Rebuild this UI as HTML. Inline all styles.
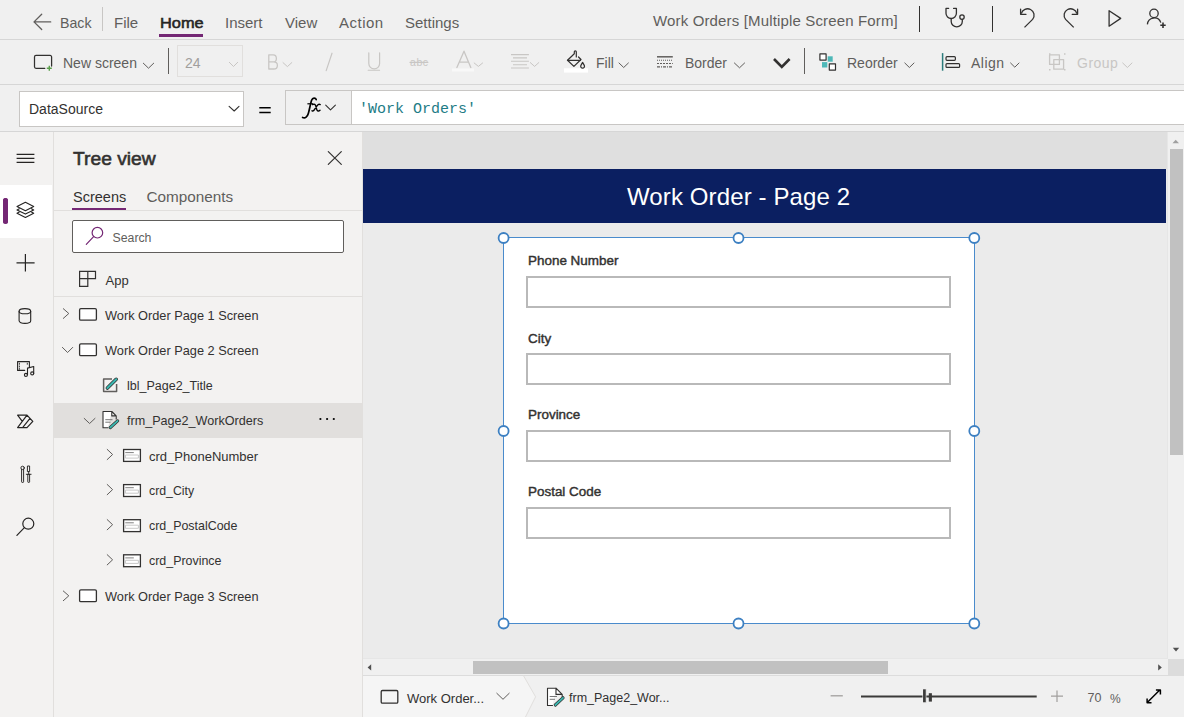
<!DOCTYPE html>
<html><head><meta charset="utf-8">
<style>
*{margin:0;padding:0;box-sizing:border-box}
html,body{width:1184px;height:717px;overflow:hidden;background:#f0f0f0;font-family:"Liberation Sans",sans-serif;color:#605e5c}
.a{position:absolute}
.t{position:absolute;white-space:nowrap;line-height:1}
svg{position:absolute;overflow:visible}
</style></head><body>

<!-- ===== HEADER ===== -->
<div class="a" style="left:0;top:0;width:1184px;height:39px;background:#f0f0f0"></div>
<div class="a" style="left:0;top:39px;width:1184px;height:1px;background:#d6d6d6"></div>
<div class="t" style="left:60px;top:16px;font-size:14.2px">Back</div>
<div class="a" style="left:102px;top:7px;width:1px;height:24px;background:#c8c6c4"></div>
<div class="t" style="left:114px;top:15px;font-size:15px">File</div>
<div class="t" style="left:159.5px;top:15px;font-size:15px;-webkit-text-stroke:0.55px #252423;color:#252423;transform:scaleX(1.09);transform-origin:0 0">Home</div>
<div class="a" style="left:159px;top:34px;width:44px;height:3px;background:#742774"></div>
<div class="t" style="left:225px;top:15px;font-size:15px">Insert</div>
<div class="t" style="left:285px;top:15px;font-size:15px">View</div>
<div class="t" style="left:339px;top:15px;font-size:15px;letter-spacing:0.5px">Action</div>
<div class="t" style="left:405px;top:15px;font-size:15px">Settings</div>
<div class="t" style="left:653px;top:12.6px;font-size:15px;letter-spacing:0.15px">Work Orders [Multiple Screen Form]</div>
<div class="a" style="left:919px;top:6px;width:1px;height:26px;background:#323130"></div>
<div class="a" style="left:992px;top:6px;width:1px;height:26px;background:#323130"></div>

<!-- ===== TOOLBAR ===== -->
<div class="a" style="left:0;top:84px;width:1184px;height:1px;background:#d6d6d6"></div>
<div class="t" style="left:63px;top:56px;font-size:14px">New screen</div>
<div class="a" style="left:168px;top:48px;width:1px;height:26px;background:#605e5c"></div>
<div class="a" style="left:177px;top:45px;width:66px;height:32px;border:1px solid #e1dfdd;background:#f0f0f0"></div>
<div class="t" style="left:185px;top:56px;font-size:14px;color:#a19f9d">24</div>
<div class="t" style="left:596px;top:56px;font-size:14px">Fill</div>
<div class="t" style="left:685px;top:56px;font-size:14px">Border</div>
<div class="a" style="left:804px;top:48px;width:1px;height:26px;background:#605e5c"></div>
<div class="t" style="left:847px;top:56px;font-size:14px">Reorder</div>
<div class="t" style="left:971px;top:56px;font-size:14px;letter-spacing:0.5px">Align</div>
<div class="t" style="left:1077px;top:56px;font-size:14px;color:#c8c6c4;letter-spacing:0.5px">Group</div>

<!-- ===== FORMULA BAR ===== -->
<div class="a" style="left:0;top:131px;width:1184px;height:1px;background:#d6d6d6"></div>
<div class="a" style="left:19px;top:91px;width:225px;height:36px;background:#fff;border:1px solid #c8c6c4"></div>
<div class="t" style="left:29px;top:102px;font-size:14px;color:#323130">DataSource</div>
<div class="a" style="left:285px;top:90px;width:67px;height:35px;border:1px solid #c8c6c4;background:#f0f0f0"></div>
<div class="a" style="left:351px;top:90px;width:833px;height:35px;border:1px solid #c8c6c4;border-right:none;background:#fff"></div>
<div class="t" style="left:359px;top:102px;font-size:15px;font-family:'Liberation Mono',monospace;color:#1e7c86">'Work Orders'</div>

<!-- ===== LEFT RAIL ===== -->
<div class="a" style="left:0;top:132px;width:53px;height:585px;background:#f3f2f1"></div>
<div class="a" style="left:53px;top:132px;width:1px;height:585px;background:#e1dfdd"></div>
<div class="a" style="left:0;top:185px;width:52px;height:53px;background:#fff"></div>
<div class="a" style="left:3px;top:198px;width:5px;height:26px;background:#742774;border-radius:3px"></div>

<!-- ===== TREE PANEL ===== -->
<div class="a" style="left:54px;top:132px;width:308px;height:585px;background:#f3f2f1"></div>
<div class="a" style="left:362px;top:132px;width:1px;height:585px;background:#e1dfdd"></div>
<div class="t" style="left:72.5px;top:150px;font-size:18.7px;-webkit-text-stroke:0.6px #323130;color:#323130;transform:scaleX(1.03);transform-origin:0 0">Tree view</div>
<div class="t" style="left:72.5px;top:188.9px;font-size:15.3px;color:#323130;transform:scaleX(0.948);transform-origin:0 0">Screens</div>
<div class="t" style="left:146.5px;top:188.9px;font-size:15.3px;color:#605e5c;transform:scaleX(1.0);transform-origin:0 0">Components</div>
<div class="a" style="left:72px;top:208px;width:54px;height:2px;background:#742774"></div>
<div class="a" style="left:54px;top:210px;width:308px;height:1px;background:#e1dfdd"></div>
<div class="a" style="left:72px;top:220px;width:272px;height:33px;background:#fff;border:1px solid #605e5c;border-radius:2px"></div>
<div class="t" style="left:112.5px;top:232.3px;font-size:12.3px;color:#605e5c">Search</div>
<div class="t" style="left:105.5px;top:274px;font-size:13px;color:#323130">App</div>
<div class="a" style="left:54px;top:296px;width:308px;height:1px;background:#e1dfdd"></div>

<div class="a" style="left:54px;top:403px;width:308px;height:35px;background:#e1dfdd"></div>

<div class="t" style="left:105px;top:309.5px;font-size:12.75px;color:#323130">Work Order Page 1 Screen</div>
<div class="t" style="left:105px;top:344.5px;font-size:12.75px;color:#323130">Work Order Page 2 Screen</div>
<div class="t" style="left:127px;top:379.5px;font-size:12.5px;color:#323130">lbl_Page2_Title</div>
<div class="t" style="left:127px;top:414.5px;font-size:12.6px;color:#323130">frm_Page2_WorkOrders</div>
<div class="t" style="left:149px;top:450px;font-size:13px;color:#323130">crd_PhoneNumber</div>
<div class="t" style="left:149px;top:485px;font-size:12.3px;color:#323130">crd_City</div>
<div class="t" style="left:149px;top:520px;font-size:12.43px;color:#323130">crd_PostalCode</div>
<div class="t" style="left:149px;top:555px;font-size:12.43px;color:#323130">crd_Province</div>
<div class="t" style="left:105px;top:590.5px;font-size:12.75px;color:#323130">Work Order Page 3 Screen</div>

<!-- ===== CANVAS ===== -->
<div class="a" style="left:363px;top:132px;width:805px;height:526px;background:#ebebeb"></div>
<div class="a" style="left:363px;top:132px;width:805px;height:37px;background:#dfdfdf"></div>
<div class="a" style="left:363px;top:169px;width:803px;height:54px;background:#0b1f61"></div>
<div class="t" style="left:627px;top:185px;font-size:24px;color:#fff;letter-spacing:0.12px">Work Order - Page 2</div>

<div class="a" style="left:503px;top:237px;width:472px;height:387px;background:#fff;border:1px solid #4a8bcc"></div>

<div class="t" style="left:527.5px;top:255.1px;font-size:12.5px;-webkit-text-stroke:0.4px #323130;color:#323130;transform:scaleX(1.075);transform-origin:0 0">Phone Number</div>
<div class="a" style="left:526px;top:276px;width:425px;height:32px;border:2px solid #b9b9b9"></div>
<div class="t" style="left:527.5px;top:333.1px;font-size:12.5px;-webkit-text-stroke:0.4px #323130;color:#323130;transform:scaleX(1.075);transform-origin:0 0">City</div>
<div class="a" style="left:526px;top:353px;width:425px;height:32px;border:2px solid #b9b9b9"></div>
<div class="t" style="left:527.5px;top:409px;font-size:12.5px;-webkit-text-stroke:0.4px #323130;color:#323130;transform:scaleX(1.075);transform-origin:0 0">Province</div>
<div class="a" style="left:526px;top:430px;width:425px;height:32px;border:2px solid #b9b9b9"></div>
<div class="t" style="left:527.5px;top:486.1px;font-size:12.5px;-webkit-text-stroke:0.4px #323130;color:#323130;transform:scaleX(1.075);transform-origin:0 0">Postal Code</div>
<div class="a" style="left:526px;top:507px;width:425px;height:32px;border:2px solid #b9b9b9"></div>

<!-- handles -->
<svg width="1184" height="717" style="left:0;top:0"><g fill="#fff" stroke="#3d80c2" stroke-width="1.8"><circle cx="503.6" cy="238" r="5"/><circle cx="738.5" cy="238" r="5"/><circle cx="974.3" cy="238" r="5"/><circle cx="503.6" cy="431" r="5"/><circle cx="974.3" cy="431" r="5"/><circle cx="503.6" cy="623.5" r="5"/><circle cx="738.5" cy="623.5" r="5"/><circle cx="974.3" cy="623.5" r="5"/></g></svg>

<!-- scrollbars -->
<div class="a" style="left:1167px;top:132px;width:17px;height:526px;background:#f0f0f0;border-left:1px solid #e6e6e6"></div>
<div class="a" style="left:1170px;top:149px;width:13px;height:306px;background:#c1c1c1"></div>
<div class="a" style="left:363px;top:658px;width:805px;height:17px;background:#f0f0f0;border-top:1px solid #e6e6e6"></div>
<div class="a" style="left:473px;top:661px;width:415px;height:13px;background:#c1c1c1"></div>
<div class="a" style="left:1168px;top:659px;width:16px;height:16px;background:#dcdcdc"></div>

<!-- status bar -->
<div class="a" style="left:363px;top:675px;width:821px;height:42px;background:#f0f0f0;border-top:1px solid #dcdcdc"></div>
<svg width="1184" height="717" style="left:0;top:0"><path d="M363 676 H523.4 L535.6 696.8 L525.5 717 H363 Z" fill="#f5f5f5" stroke="none"/></svg>
<div class="t" style="left:407px;top:692px;font-size:13px;color:#323130">Work Order...</div>
<div class="t" style="left:569px;top:692px;font-size:12.5px;color:#323130">frm_Page2_Wor...</div>
<div class="t" style="left:1087.5px;top:692px;font-size:12.5px;color:#605e5c">70</div>
<div class="t" style="left:1110px;top:692.5px;font-size:12px;color:#605e5c">%</div>


<svg width="1184" height="717" style="left:0;top:0" fill="none" stroke-linecap="round" stroke-linejoin="round">
<!-- header icons -->
<path d="M41.7 14.3 L34 21.9 L41.7 29.5 M34 21.9 H50.7" stroke="#605e5c" stroke-width="1.3"/>
<g stroke="#323130" stroke-width="1.3">
<path d="M948.6 8.4 H946 V13.3 A5.2 5.2 0 0 0 956.4 13.3 V8.4 H953.6"/>
<path d="M951.2 18.6 V21.4 A5.55 5.55 0 0 0 962.3 21.4 V19.5"/>
<circle cx="962" cy="17.1" r="2.2"/>
<path d="M1020.6 9.2 V14.3 H1026"/>
<path d="M1021.3 13.6 A6.5 6.5 0 1 1 1032.6 19.4 L1024.5 27.4" stroke-linecap="butt"/>
<g transform="translate(2098.2 0) scale(-1 1)">
<path d="M1020.6 9.2 V14.3 H1026"/>
<path d="M1021.3 13.6 A6.5 6.5 0 1 1 1032.6 19.4 L1024.5 27.4" stroke-linecap="butt"/>
</g>
<path d="M1109.1 10.7 V26.2 L1120.7 18.4 Z"/>
<circle cx="1154" cy="13.4" r="4.2"/>
<path d="M1147.4 24.4 A6.9 6.9 0 0 1 1160.8 22.6" stroke-linecap="butt"/>
<path d="M1163 22.5 V28 M1160.3 25.3 H1165.7" stroke-width="1.6" stroke-linecap="butt"/>
</g>

<!-- toolbar icons -->
<path d="M44.8 68.3 H36 A1.5 1.5 0 0 1 34.5 66.8 V56.9 A1.5 1.5 0 0 1 36 55.4 H50.1 A1.5 1.5 0 0 1 51.6 56.9 V66" stroke="#323130" stroke-width="1.25"/>
<path d="M49.3 65.8 V70.8 M46.8 68.3 H51.8" stroke="#5a9e4b" stroke-width="1.4" stroke-linecap="butt"/>
<path d="M143.3 63.2 L148.5 68.2 L153.7 63.2" stroke="#605e5c" stroke-width="1"/>
<path d="M229.3 62.3 L233.5 66.5 L237.7 62.3" stroke="#c8c6c4" stroke-width="1"/>
<g stroke="#c8c6c4" stroke-width="1.3">
<path d="M268.8 54.8 V69 H273.7 C276.1 69 277.4 67.5 277.4 65.4 C277.4 63.3 276 61.9 273.6 61.9 H268.8 M273.3 61.9 C275.2 61.9 276.4 60.6 276.4 58.4 C276.4 56.3 275.2 54.8 273.1 54.8 H268.8"/>
<path d="M283 62.6 L287.4 66.6 L291.8 62.6" stroke-width="1"/>
<path d="M332 53.2 L326.2 70.6" stroke-width="1.2"/>
<path d="M368.8 52.8 V63.5 A5.4 5.4 0 0 0 379.6 63.5 V52.8" stroke-width="1.2"/>
<path d="M368.2 70.3 H379.6" stroke-width="1.1"/>
<path d="M456.9 67.6 L464 51.2 L470.8 67.6 M459.2 62.2 H468.6" stroke-width="1.3"/>
<path d="M474.2 63 L478.4 66.4 L482.6 63" stroke-width="1"/>
<path d="M511 54.6 H528.9 M513 57.9 H527 M511 61.3 H528.9 M513 64.7 H527 M511 68 H528.9" stroke-width="1.1" stroke-linecap="butt"/>
<path d="M530.3 62.6 L534.6 66.4 L538.8 62.6" stroke-width="1"/>
<path d="M1049 54 h1.5 M1064 54 h1.5 M1049 69.8 h1.5 M1064 69.8 h1.5" stroke-width="1.6" stroke-linecap="butt"/>
<rect x="1049.6" y="54.8" width="9.8" height="9.6"/>
<rect x="1053.8" y="59.6" width="9.8" height="9.6"/>
<path d="M1122.7 63 L1127.4 67.5 L1132 63" stroke-width="1"/>
</g>
<g font-family="Liberation Sans" fill="#c8c6c4" stroke="none"><text x="410" y="66" font-size="10.5" textLength="18">abc</text></g>
<path d="M410 62.4 H427.9" stroke="#c8c6c4" stroke-width="1.1"/>
<rect x="452" y="68.5" width="22" height="3" fill="#f8f8f8"/>

<!-- fill -->
<rect x="564" y="68.3" width="24" height="4.3" fill="#ffffff"/>
<g stroke="#323130" stroke-width="1.2">
<path d="M574.3 53.8 V51.8 A1 1 0 0 1 576.3 51.8 V57 M574.3 53.8 L567.5 60.3 L573.9 66.4 L581 59.5 L578.5 57"/>
<path d="M567.5 60.3 H580.3"/>
<path d="M582.6 62.4 L580.8 65.6 A1.9 1.9 0 1 0 584.4 65.6 Z"/>
</g>
<path d="M619 63 L623.7 67.5 L628.4 63" stroke="#605e5c" stroke-width="1"/>
<!-- border -->
<g stroke="#605e5c" stroke-linecap="butt">
<path d="M657 56.8 H672.8" stroke-width="1.5"/>
<path d="M657 60.2 H672.8" stroke-width="1.1" stroke-dasharray="1 1"/>
<path d="M657 63.5 H672.8" stroke-width="1.1" stroke-dasharray="2 1"/>
<path d="M657 66.9 H672.8" stroke-width="1.1" stroke-dasharray="3 1 1 1"/>
</g>
<path d="M734.4 63 L739.5 67.8 L744.6 63" stroke="#605e5c" stroke-width="1"/>
<path d="M774 59 L781.8 67 L789.6 59" stroke="#323130" stroke-width="2.6" stroke-linecap="butt" stroke-linejoin="miter"/>
<!-- reorder -->
<rect x="827.7" y="56.3" width="5" height="5.4" fill="#4db8b8"/>
<rect x="822" y="62.1" width="5.3" height="5.4" fill="#4db8b8"/>
<rect x="819.9" y="53.9" width="6.2" height="6.2" stroke="#323130" stroke-width="1.2" fill="#fff"/>
<rect x="829.3" y="63.8" width="6.2" height="6.3" stroke="#323130" stroke-width="1.2" fill="#fff"/>
<path d="M904.8 63 L909.4 67.5 L914 63" stroke="#605e5c" stroke-width="1"/>
<!-- align -->
<path d="M942.6 53.1 V70.7" stroke="#2a7b7b" stroke-width="1.5" stroke-linecap="butt"/>
<rect x="946" y="56.7" width="9.4" height="3.6" rx="1" stroke="#323130" stroke-width="1.2"/>
<rect x="946" y="63.6" width="13.6" height="3.8" rx="1" stroke="#323130" stroke-width="1.2"/>
<path d="M1010.6 63 L1014.8 67.2 L1019 63" stroke="#605e5c" stroke-width="1"/>

<!-- formula -->
<path d="M229.1 106.4 L234.2 111 L239 106.4" stroke="#323130" stroke-width="1.1"/>
<path d="M259.3 107.7 H270.7 M259.3 112.5 H270.7" stroke="#000" stroke-width="1.6" stroke-linecap="butt"/>
<path d="M316.2 99.6 C315.6 97.6 312.6 97.4 311.6 100.2 C310.6 103 309.4 110 308.4 113.2 C307.4 116.8 305.2 118.6 302.6 117.4" stroke="#000" stroke-width="1.7" stroke-linecap="round"/>
<path d="M307.4 103.8 H313.2" stroke="#000" stroke-width="1.2" stroke-linecap="butt"/>
<path d="M312.6 104.6 C314.4 103.6 315.4 104.4 315.9 106.4 L316.7 109.4 C317.2 111.2 318.6 111.6 320 110.2 M320.2 104.6 C319 103.8 318.2 104.2 317 105.8 L314.6 109.4 C313.8 110.8 313 111.2 312 110.8" stroke="#000" stroke-width="1.4" stroke-linecap="round"/>
<path d="M325.7 105.2 L330.5 109.8 L335.4 105.2" stroke="#323130" stroke-width="1.1"/>

<!-- left rail -->
<g stroke="#252423" stroke-width="1.2">
<path d="M16.6 154.4 H34.4 M16.6 158.4 H34.4 M16.6 162.4 H34.4" stroke-linecap="butt"/>
<path d="M17 206.5 L25.4 202.3 L33.7 206.5 L25.4 210.7 Z" stroke-width="1.1"/>
<path d="M19.3 208.7 L17 209.9 L25.4 214.1 L33.7 209.9 L31.5 208.7" stroke-width="1.1"/>
<path d="M19.3 212.1 L17 213.3 L25.4 217.5 L33.7 213.3 L31.5 212.1" stroke-width="1.1"/>
<path d="M25.4 254 V271.6 M16.5 262.8 H34.6" stroke-linecap="butt"/>
<ellipse cx="24.9" cy="311.2" rx="5.8" ry="2.6" stroke-width="1.1"/>
<path d="M19.1 311.2 V320.8 A5.8 2.6 0 0 0 30.7 320.8 V311.2" stroke-width="1.1"/>
<path d="M24.7 370.4 H17.6 V361.6 H29.4 V366.8" stroke-width="1.1"/>
<path d="M19.4 363.2 V364.3 M19.4 366 V367 M19.4 368.5 V369.3 M27.3 363.2 V364.3" stroke-width="0.9"/>
<path d="M27.5 374.8 V368.1 L33.7 366.5 V373.4" stroke-width="1.1"/>
<circle cx="25.9" cy="374.9" r="1.5" stroke-width="1.1"/>
<circle cx="32.2" cy="373.4" r="1.5" stroke-width="1.1"/>
<path d="M17.6 415.2 H27 L32.8 421.4 L27 427.6 H17.6 L22.3 421.4 Z M27 415.2 L17.6 427.6 M30 418.4 L22.6 427.6" stroke-width="1.2"/>
<circle cx="22.6" cy="467.9" r="1.7" stroke-width="0.95"/><path d="M21.6 469.4 V481.8 Q21.6 482.4 22.2 482.4 H23 Q23.6 482.4 23.6 481.8 V469.4" stroke-width="0.95"/>
<path d="M27.8 466 H29.6 V471.6 H27.8 Z M28.7 471.6 V474.3 M26.3 474.3 H31.1 M27.8 474.3 V481.8 Q27.8 482.4 28.4 482.4 H29 Q29.6 482.4 29.6 481.8 V474.3" stroke-width="0.95"/>
<circle cx="28.3" cy="523.7" r="5.5" stroke-width="1.2"/>
<path d="M24.4 527.7 L16.9 535.4" stroke-width="1.2"/>
</g>
<path d="M5.5 200.6 V221" stroke="#742774" stroke-width="5"/>

<!-- tree panel icons -->
<path d="M328.3 151.6 L341.3 164.4 M341.3 151.6 L328.3 164.4" stroke="#323130" stroke-width="1.2"/>
<circle cx="97.4" cy="232.7" r="5.3" stroke="#742774" stroke-width="1.2"/>
<path d="M93.6 236.6 L86.3 244.3" stroke="#742774" stroke-width="1.2"/>
<g stroke="#323130" stroke-width="1.2" stroke-linecap="butt" stroke-linejoin="miter">
<path d="M79.6 271.4 H95.5 V278.6 H79.6 Z M79.6 271.4 V286.4 H87.8 V271.4"/>
</g>
<g stroke="#605e5c" stroke-width="1">
<path d="M63.3 308.7 L68.8 313.5 L63.3 318.4"/>
<path d="M62.4 347.4 L67.6 352.5 L72.7 347.4"/>
<path d="M84.2 418.4 L89.6 423.5 L95 418.4"/>
<path d="M107.2 449.4 L112.6 454.5 L107.2 459.6"/>
<path d="M107.2 484.5 L112.6 489.6 L107.2 494.7"/>
<path d="M107.2 519.6 L112.6 524.7 L107.2 529.8"/>
<path d="M107.2 554.7 L112.6 559.8 L107.2 564.9"/>
<path d="M63.3 591 L68.8 595.8 L63.3 600.7"/>
</g>
<g stroke="#323130" stroke-width="1.3" fill="#fff">
<rect x="79.6" y="308.6" width="16.8" height="11.6" rx="1.3"/>
<rect x="79.6" y="343.8" width="16.8" height="11.9" rx="1.3"/>
<rect x="79.6" y="589.8" width="16.8" height="11.9" rx="1.3"/>
</g>
<!-- lbl icon -->
<path d="M112 378.9 H103.6 V391.5 H116.6 V384" stroke="#605e5c" stroke-width="1.5" stroke-linecap="butt"/>
<path d="M116.2 379.3 L107.4 388" stroke="#323130" stroke-width="3.6" />
<path d="M116.2 379.3 L107.4 388" stroke="#3ab7b0" stroke-width="2.1" />
<!-- frm icon -->
<path d="M111.8 411.5 H103 V427.8 H108 M111.8 411.5 L116.2 415.9 V419 M111.8 411.5 V415.9 H116.2" stroke="#323130" stroke-width="1.1" fill="#fff"/>
<path d="M105.3 419.7 H112.5 M105.3 422.2 H110.5" stroke="#777" stroke-width="1" stroke-linecap="butt"/>
<path d="M117.6 420.9 L110.3 427.5" stroke="#323130" stroke-width="3.2"/>
<path d="M117.6 420.9 L110.3 427.5" stroke="#3ab7b0" stroke-width="1.8"/>
<!-- dots -->
<g fill="#000" stroke="none"><circle cx="320.4" cy="419" r="1.1"/><circle cx="327.1" cy="419" r="1.1"/><circle cx="333.8" cy="419" r="1.1"/></g>
<!-- card icons -->
<g id="card">
<rect x="123.6" y="449.5" width="16.8" height="11.9" stroke="#323130" stroke-width="1.3" fill="#fff" stroke-linejoin="miter"/>
<path d="M125.3 452.6 H133.8" stroke="#808080" stroke-width="1" stroke-linecap="butt"/>
<rect x="125.8" y="455" width="12.6" height="3.1" stroke="#c8c8c8" stroke-width="1"/>
</g>
<use href="#card" y="35.1"/>
<use href="#card" y="70.2"/>
<use href="#card" y="105.3"/>

<!-- status bar -->
<rect x="381.2" y="690.5" width="16.6" height="12.7" rx="1.3" stroke="#323130" stroke-width="1.3"/>
<path d="M496.8 693.3 L503 699.3 L509.2 693.3" stroke="#605e5c" stroke-width="1"/>
<path d="M523.4 675.5 L535.6 696.8 L525.5 717" stroke="#e1dfdd" stroke-width="1"/>
<path d="M556 688.2 H547.5 V705.5 H552.5 M556 688.2 L562.2 694.4 V697 M556 688.2 V694.4 H562.2" stroke="#323130" stroke-width="1.1" fill="#fff"/>
<path d="M549.7 696.5 H557 M549.7 699.3 H555" stroke="#777" stroke-width="1" stroke-linecap="butt"/>
<path d="M563 697.8 L555.3 705" stroke="#323130" stroke-width="3.2"/>
<path d="M563 697.8 L555.3 705" stroke="#3ab7b0" stroke-width="1.8"/>
<path d="M830.6 695.8 H842.8" stroke="#a19f9d" stroke-width="1.3" stroke-linecap="butt"/>
<path d="M861 696.5 H1036.7" stroke="#3b3a39" stroke-width="1.9" stroke-linecap="butt"/>
<rect x="923" y="689" width="3.1" height="13.6" fill="#3b3a39" stroke="#f0f0f0" stroke-width="0.6"/>
<rect x="928.8" y="693.2" width="3.1" height="8.4" fill="#3b3a39"/>
<path d="M1051 696.2 H1063 M1057 690.4 V702" stroke="#a19f9d" stroke-width="1.2" stroke-linecap="butt"/>
<path d="M1147.5 702.3 L1160 689.8 M1155.9 690.1 H1160.4 V694.6 M1147.1 698.4 V702.8 H1151.5" stroke="#000" stroke-width="1.5" stroke-linecap="butt"/>

<!-- scroll arrows -->
<path d="M1172.5 143.2 L1175.7 139.8 L1179 143.2 Z" fill="#a0a0a0" stroke="none"/>
<path d="M1172.8 647.8 L1176 651.4 L1179.2 647.8 Z" fill="#505050" stroke="none"/>
<path d="M371.2 664.2 L367.6 667.4 L371.2 670.6 Z" fill="#505050" stroke="none"/>
<path d="M1158.2 664.2 L1161.8 667.4 L1158.2 670.6 Z" fill="#505050" stroke="none"/>
</svg>

</body></html>
